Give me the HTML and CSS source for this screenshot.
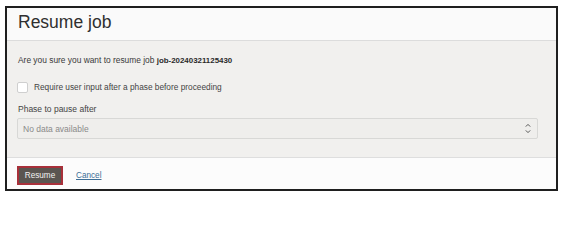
FILE: index.html
```html
<!DOCTYPE html>
<html>
<head>
<meta charset="utf-8">
<link rel="stylesheet" href="styles.css">
</head>
<body>
<div class="dialog">
  <div class="dialog-header">
    <h1 class="title">Resume job</h1>
  </div>
  <div class="dialog-body">
    <p class="message">Are you sure you want to resume job <b class="job-id">job-20240321125430</b></p>
    <label class="check-row">
      <span class="checkbox"></span>
      <span class="check-label">Require user input after a phase before proceeding</span>
    </label>
    <div class="field-label">Phase to pause after</div>
    <div class="select">
      <span class="select-text">No data available</span>
      <svg class="select-icon" width="6" height="11" viewBox="0 0 6 11">
        <path d="M0.8 3.6 L3 1.4 L5.2 3.6" fill="none" stroke="#555" stroke-width="1"/>
        <path d="M0.8 7.4 L3 9.6 L5.2 7.4" fill="none" stroke="#555" stroke-width="1"/>
      </svg>
    </div>
  </div>
  <div class="dialog-footer">
    <button class="btn-primary">Resume</button>
    <a class="link" href="#">Cancel</a>
  </div>
</div>
</body>
</html>
```

FILE: styles.css
```css
html, body {
  margin: 0;
  padding: 0;
  background: #ffffff;
}
body {
  font-family: "Liberation Sans", Arial, sans-serif;
  color: #333333;
}
.dialog {
  margin: 6px 0 0 5px;
  width: 549px;
  height: 181px;
  border: 2px solid #1f1f1f;
  display: flex;
  flex-direction: column;
  background: #f1f0ee;
}
.dialog-header {
  height: 33px;
  background: #fafafa;
  border-bottom: 1px solid #dcdcdc;
  padding-left: 11px;
  box-sizing: border-box;
}
.title {
  margin: 0;
  font-weight: normal;
  font-size: 17.5px;
  line-height: 20px;
  padding-top: 4px;
  color: #2f2f2f;
}
.dialog-body {
  height: 117px;
  padding: 0 18px 0 10px;
  border-bottom: 1px solid #dedede;
  box-sizing: border-box;
}
.message {
  margin: 14px 0 0 1px;
  font-size: 8.4px;
  line-height: 10px;
  color: #3a3a3a;
}
.job-id {
  font-size: 7.9px;
  color: #2a2a2a;
}
.check-row {
  display: flex;
  align-items: center;
  gap: 6px;
  margin-top: 16px;
  height: 10px;
}
.checkbox {
  width: 9px;
  height: 9px;
  border: 1px solid #cfcfcf;
  border-radius: 2px;
  background: #ffffff;
}
.check-label {
  font-size: 8.3px;
  line-height: 10px;
  color: #444444;
}
.field-label {
  margin: 12px 0 0 1px;
  font-size: 8.5px;
  line-height: 10px;
  color: #444444;
}
.select {
  margin-top: 4px;
  height: 21px;
  box-sizing: border-box;
  border: 1px solid #d8d8d6;
  border-radius: 2px;
  background: #efeeec;
  display: flex;
  align-items: center;
  justify-content: space-between;
  padding: 0 6px 0 5px;
}
.select-text {
  font-size: 8.5px;
  color: #8a8a8a;
}
.select-icon {
  display: block;
}
.dialog-footer {
  flex: 1;
  background: #fcfcfc;
  display: flex;
  align-items: flex-start;
  padding: 8px 0 0 10px;
  gap: 13px;
}
.btn-primary {
  height: 19px;
  width: 46px;
  padding: 0;
  border: 2px solid #a8303a;
  background: #5a5550;
  color: #f2f2f2;
  font-family: "Liberation Sans", Arial, sans-serif;
  font-size: 8.2px;
  line-height: 15px;
}
.link {
  font-size: 8.2px;
  line-height: 19px;
  color: #3d6e96;
  text-decoration: underline;
}
```
